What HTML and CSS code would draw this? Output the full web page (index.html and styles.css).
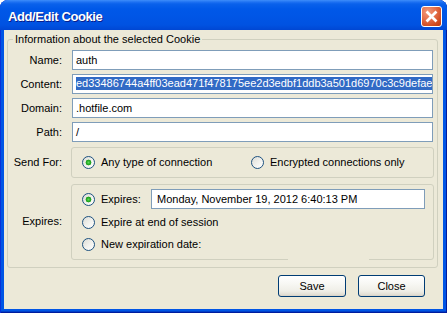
FILE: index.html
```html
<!DOCTYPE html>
<html>
<head>
<meta charset="utf-8">
<title>Add/Edit Cookie</title>
<link rel="stylesheet" href="styles.css">
</head>
<body>
<div class="window">
  <div class="titlebar">
    <span class="title">Add/Edit Cookie</span>
    <span class="close">
      <svg width="19" height="19" viewBox="0 0 19 19"><path d="M5.5 5.5 L13.5 13.5 M13.5 5.5 L5.5 13.5" stroke="#fff" stroke-width="2.7" stroke-linecap="square" fill="none"/></svg>
    </span>
  </div>
  <div class="client">
    <fieldset class="info">
      <legend>Information about the selected Cookie</legend>
      <div class="form">
        <label class="lbl">Name:</label>
        <div class="field">auth</div>
        <label class="lbl">Content:</label>
        <div class="field"><span class="sel">ed33486744a4ff03ead471f478175ee2d3edbf1ddb3a501d6970c3c9defae</span></div>
        <label class="lbl">Domain:</label>
        <div class="field">.hotfile.com</div>
        <label class="lbl">Path:</label>
        <div class="field">/</div>
        <label class="lbl">Send For:</label>
        <div class="group sendfor">
          <span class="opt first"><span class="radio on"></span>Any type of connection</span>
          <span class="opt"><span class="radio"></span>Encrypted connections only</span>
        </div>
        <label class="lbl">Expires:</label>
        <div class="group expires">
          <div class="exp-row">
            <span class="opt exp-label"><span class="radio on"></span>Expires:</span>
            <div class="field date">Monday, November 19, 2012 6:40:13 PM</div>
          </div>
          <div class="exp-row second">
            <span class="opt"><span class="radio"></span>Expire at end of session</span>
          </div>
          <div class="exp-row">
            <span class="opt"><span class="radio"></span>New expiration date:</span>
          </div>
          <span class="border-gap"></span>
        </div>
      </div>
    </fieldset>
    <div class="buttons">
      <button class="btn save">Save</button>
      <button class="btn close-btn">Close</button>
    </div>
  </div>
</div>
</body>
</html>
```

FILE: styles.css
```css
html, body {
  margin: 0;
  padding: 0;
  background: #ffffff;
}

body {
  font-family: "Liberation Sans", Arial, sans-serif;
  font-size: 11px;
  color: #000;
}

.window {
  width: 447px;
  height: 313px;
  box-sizing: border-box;
  display: flex;
  flex-direction: column;
  padding: 0 4px 4px 4px;
  border-radius: 8px 8px 0 0;
  background: #0055E5;
  box-shadow: inset 1px 0 #0831D9, inset -1px 0 #001C9E, inset 0 -1px #001C9E, inset 0 -2px #0040C8;
}

.titlebar {
  height: 30px;
  margin: 0 -4px;
  padding: 0 5px 0 8px;
  display: flex;
  align-items: flex-start;
  justify-content: space-between;
  border-radius: 8px 8px 0 0;
  background: linear-gradient(#3E8DFA 0px, #1F72F2 2px, #0A61EB 4px, #0058E8 9px, #0055E5 18px, #0052E1 25px, #0049D6 29px, #0046D2 30px);
}

.title {
  margin-top: 9px;
  line-height: 15px;
  font-size: 13px;
  font-weight: bold;
  letter-spacing: -0.4px;
  color: #ffffff;
  text-shadow: 1px 1px 0 #0A1E8C;
}

.close {
  margin-top: 6px;
  width: 21px;
  height: 21px;
  box-sizing: border-box;
  border: 1px solid #ffffff;
  border-radius: 3px;
  display: flex;
  align-items: center;
  justify-content: center;
  background: radial-gradient(circle at 30% 25%, #F19A7C 0%, #E5714E 40%, #D04B1F 75%, #B83A10 100%);
}

.close svg {
  display: block;
}

.client {
  flex: 1;
  background: #ECE9D8;
  padding-top: 3px;
  display: flex;
  flex-direction: column;
}

.info {
  margin: 0 5px 0 3px;
  padding: 0 3px 7px 0;
  border: 1px solid #D0D0BF;
  border-radius: 3px;
}

.info legend {
  margin-left: 5px;
  padding: 0 2px;
  line-height: 13px;
}

.form {
  margin-top: 4px;
  display: grid;
  grid-template-columns: 54px 1fr;
  column-gap: 9px;
  row-gap: 4px;
  align-items: center;
}

.lbl {
  text-align: right;
  line-height: 13px;
}

.field {
  height: 20px;
  box-sizing: border-box;
  margin: 0 1px;
  border: 1px solid #7F9DB9;
  background: #ffffff;
  padding: 0 3px;
  line-height: 18px;
  white-space: nowrap;
  overflow: hidden;
}

.sel {
  display: inline-block;
  line-height: 13px;
  background: #316AC5;
  color: #ffffff;
  vertical-align: top;
  margin-top: 2px;
}

.group {
  border: 1px solid #D0D0BF;
  border-radius: 3px;
  box-sizing: border-box;
}

.sendfor {
  margin-top: 1px;
  height: 31px;
  display: flex;
  align-items: center;
  padding-left: 10px;
}

.opt {
  display: flex;
  align-items: center;
  gap: 6px;
  line-height: 13px;
  white-space: nowrap;
}

.opt.first {
  width: 169px;
}

.radio {
  width: 13px;
  height: 13px;
  box-sizing: border-box;
  border-radius: 50%;
  border: 1px solid #1C5180;
  background: linear-gradient(135deg, #DCDCD5 0%, #F2F2EE 55%, #FFFFFF 100%);
  flex: none;
}

.radio.on {
  background:
    radial-gradient(circle at 50% 50%, #5ED85B 0px, #2FB52D 1.5px, #1A9B1A 2.6px, rgba(26,155,26,0) 3.2px),
    linear-gradient(135deg, #DCDCD5 0%, #F2F2EE 55%, #FFFFFF 100%);
}

.expires {
  position: relative;
  margin-top: 2px;
  height: 76px;
  padding: 4px 0 0 10px;
  display: flex;
  flex-direction: column;
  gap: 2px;
}

.exp-row {
  height: 20px;
  display: flex;
  align-items: center;
}

.exp-row.second {
  margin-top: 1px;
}

.exp-label {
  width: 69px;
}

.field.date {
  margin: 0;
  width: 274px;
  padding: 0 5px;
}

.border-gap {
  position: absolute;
  left: 216px;
  bottom: -1px;
  width: 81px;
  height: 1px;
  background: #ECE9D8;
}

.buttons {
  margin-top: 7px;
  padding-right: 18px;
  display: flex;
  justify-content: flex-end;
  gap: 12px;
}

.btn {
  height: 22px;
  box-sizing: border-box;
  border: 1px solid #003C74;
  border-radius: 3px;
  background: linear-gradient(#FFFFFF 0%, #F7F7F3 40%, #EFEEE7 75%, #E2DFD5 92%, #D6D0C5 100%);
  font-family: "Liberation Sans", Arial, sans-serif;
  font-size: 11px;
  color: #000;
  padding: 0;
}

.btn.save {
  width: 68px;
}

.btn.close-btn {
  width: 67px;
}
```
